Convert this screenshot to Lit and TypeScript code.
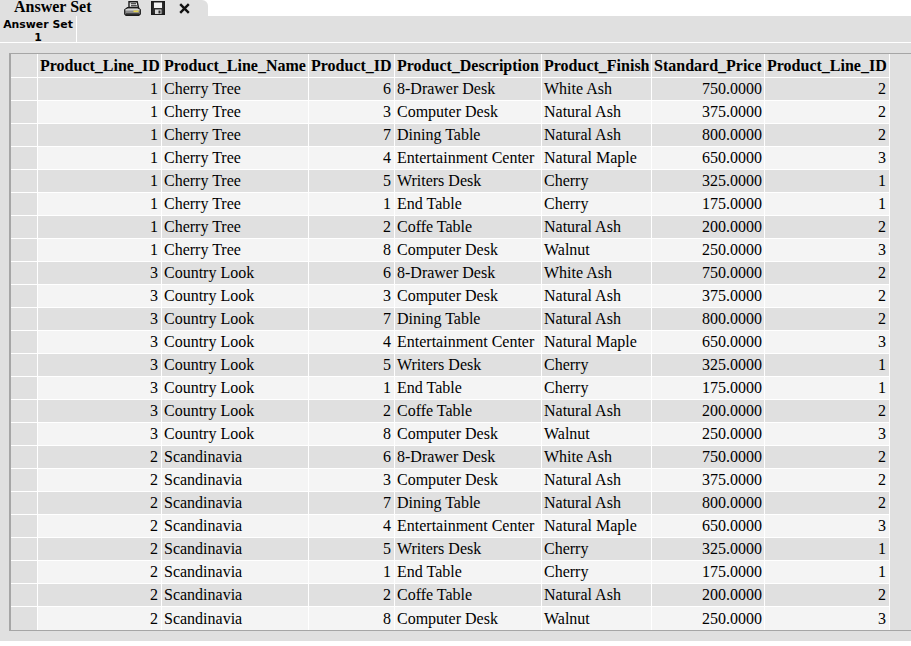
import { LitElement, html, css, svg } from "lit";
import { customElement } from "lit/decorators.js";

const lines: [number, string][] = [[1, "Cherry Tree"], [3, "Country Look"], [2, "Scandinavia"]];
const products: [number, string, string, string, number][] = [
  [6, "8-Drawer Desk", "White Ash", "750.0000", 2],
  [3, "Computer Desk", "Natural Ash", "375.0000", 2],
  [7, "Dining Table", "Natural Ash", "800.0000", 2],
  [4, "Entertainment Center", "Natural Maple", "650.0000", 3],
  [5, "Writers Desk", "Cherry", "325.0000", 1],
  [1, "End Table", "Cherry", "175.0000", 1],
  [2, "Coffe Table", "Natural Ash", "200.0000", 2],
  [8, "Computer Desk", "Walnut", "250.0000", 3],
];
const heads = ["Product_Line_ID", "Product_Line_Name", "Product_ID", "Product_Description", "Product_Finish", "Standard_Price", "Product_Line_ID"];
const widths = [27, 124, 147, 86, 147, 110, 113, 125];

@customElement("app-root")
export class AppRoot extends LitElement {
  static styles = css`
    :host { display: block; width: 911px; height: 646px; background: #fff; font-family: "Liberation Serif", serif; color: #000; overflow: hidden; }
    .title { display: flex; align-items: center; width: 208px; height: 16px; background: #e0e0e0; border-top-right-radius: 6px; }
    .title b { font-size: 16px; line-height: 14px; margin: -2px 0 0 14px; width: 110px; }
    .title svg { display: block; flex: none; }
    .icons { display: flex; align-items: center; gap: 10px; }
    .icons .x { margin-left: 4px; }
    .panel { background: #e0e0e0; height: 625px; }
    .tabs { height: 26px; border-bottom: 1px solid #fff; }
    .tab { width: 77px; height: 26px; box-sizing: border-box; border-right: 1px solid #fff; text-align: center; font: bold 10.9px/13px "DejaVu Sans", sans-serif; padding-top: 2px; }
    .grid { margin: 10px 0 0 9px; border: 2px solid #a6a6a6; border-width: 1px 0 1px 2px; height: 576px; overflow: hidden; }
    table { border-collapse: separate; border-spacing: 0; table-layout: fixed; width: 879px; font-size: 16px; }
    th, td { height: 23px; box-sizing: border-box; padding: 0 2px; border-right: 1px solid #fff; border-bottom: 1px solid #fff; white-space: nowrap; overflow: hidden; line-height: 22px; text-align: left; }
    th { font-weight: bold; height: 24px; }
    .n { text-align: right; padding-right: 3px; }
    td.p { padding-right: 2px; }
    tr.odd td { background: #e0e0e0; }
    tr.even td { background: #f4f4f4; }
    tr td.rh { background: #e0e0e0; }
    tr:last-child td { border-bottom: none; }
  `;

  private printer() {
    return svg`<svg width="17" height="15" viewBox="0 0 17 15"><path d="M5 .8h8.200l1.300 5.700H5z" fill="#eee" stroke="#1a1a1a" stroke-width="1.400"/><path d="M6.800 2.800h5.200M7 4.700h5.800" stroke="#1a1a1a" stroke-width="1.100"/><path d="M3.500 6.500h10.500l2.300 2.200v4.300l-1.500 1.300H2L.7 13V8.700z" fill="#8a8a8a" stroke="#1a1a1a" stroke-width="1.200"/><path d="M1.500 8.800h14" stroke="#e8e8e8" stroke-width="1.200"/><path d="M9.500 10.300h5" stroke="#e4d34a" stroke-width="1.600"/><path d="M2 12.300h13v1.800H2z" fill="#2a2a2a"/></svg>`;
  }
  private floppy() {
    return svg`<svg width="14" height="14" viewBox="0 0 14 14"><path d="M.7.700h12.600v12.600H.7z" fill="#2e2e2e" stroke="#1a1a1a" stroke-width="1.400"/><path d="M3 1.500h8v5.500H3z" fill="#f2f2f2"/><path d="M4 8.500h6.500v4.500H4z" fill="#d8d8d8"/><path d="M7.500 9.500h2v3h-2z" fill="#2e2e2e"/></svg>`;
  }
  private close() {
    return svg`<svg class="x" width="11" height="11" viewBox="0 0 11 11"><path d="M1.200 1.200l8.600 8.600M9.800 1.200l-8.600 8.600" stroke="#111" stroke-width="2.400" fill="none"/></svg>`;
  }

  render() {
    let i = 0;
    return html`
      <div class="title"><b>Answer Set</b><span class="icons">${this.printer()}${this.floppy()}${this.close()}</span></div>
      <div class="panel">
        <div class="tabs"><div class="tab">Answer Set<br />1</div></div>
        <div class="grid">
          <table>
            <colgroup>${widths.map((w) => html`<col style="width:${w}px" />`)}</colgroup>
            <tr><th></th>${heads.map((h) => html`<th>${h}</th>`)}</tr>
            ${lines.flatMap(([id, name]) =>
              products.map((p) => {
                const cls = i++ % 2 === 0 ? "odd" : "even";
                return html`<tr class=${cls}>
                  <td class="rh"></td><td class="n">${id}</td><td>${name}</td><td class="n">${p[0]}</td>
                  <td>${p[1]}</td><td>${p[2]}</td><td class="n p">${p[3]}</td><td class="n">${p[4]}</td>
                </tr>`;
              })
            )}
          </table>
        </div>
      </div>
    `;
  }
}
